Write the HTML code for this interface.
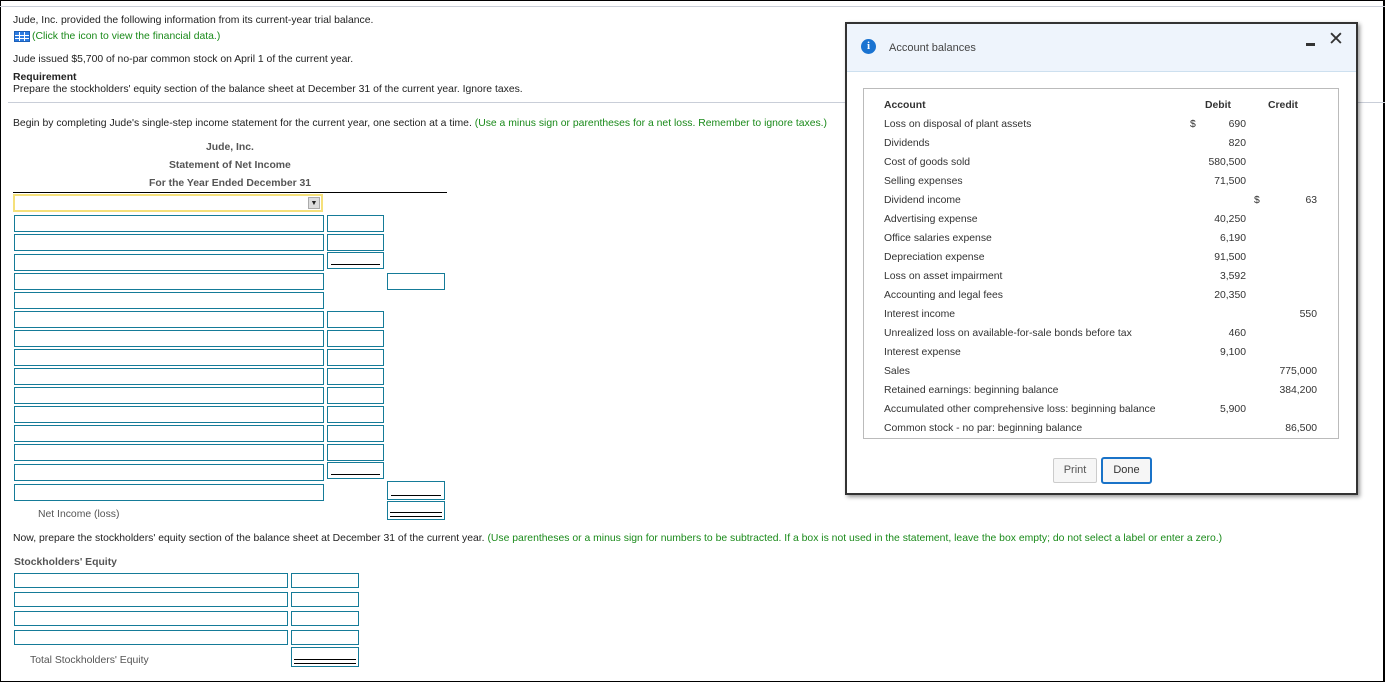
<!DOCTYPE html>
<html><head><meta charset="utf-8"><style>
*{margin:0;padding:0;box-sizing:border-box}
body{width:1385px;height:682px;position:relative;overflow:hidden;background:#fff;font-family:"Liberation Sans",Arial,sans-serif;font-size:10.4px;color:#222}
.frame{position:absolute;left:0;top:0;width:1385px;height:682px;border:1px solid #000;border-right-width:2px}
.t{position:absolute;white-space:nowrap}
.g{color:#1a8a1a}
.b{position:absolute;border:1px solid #157b98;background:#fff;height:17px}
.u::after{content:"";position:absolute;left:3px;right:3px;bottom:3px;border-bottom:1px solid #000}
.dd::after{content:"";position:absolute;left:2px;right:2px;bottom:2px;border-bottom:1px solid #000;height:3px;border-top:1px solid #000}
.hr{position:absolute;height:1px;background:#c9ced8}
.modal{position:absolute;left:845px;top:22px;width:513px;height:473px;border:2px solid #333;background:#fff;box-shadow:2px 2px 4px rgba(0,0,0,.4)}
.mh{position:absolute;left:0;top:0;right:0;height:48px;background:#eef4fc;border-bottom:1px solid #cde0ef}
.tbl{position:absolute;left:16px;top:64px;width:476px;height:351px;border:1px solid #bbb}
.r{position:absolute;left:20px;width:450px;height:19px;color:#333}
.r span{position:absolute;top:0}
</style></head><body>
<div class="frame"></div>
<div class="hr" style="left:0;top:6px;width:1385px"></div>
<div class="t" style="left:13px;top:15px">Jude, Inc. provided the following information from its current-year trial balance.</div>
<div class="t" style="left:14px;top:31px;width:16px;height:11px;background:#2c7be0;border:1px solid #1b5fb8;background-image:linear-gradient(90deg,transparent 4px,#fff 4px,#fff 5px,transparent 5px,transparent 9px,#fff 9px,#fff 10px,transparent 10px),linear-gradient(transparent 3px,#fff 3px,#fff 4px,transparent 4px,transparent 6px,#fff 6px,#fff 7px,transparent 7px)"></div>
<div class="t g" style="left:32px;top:31px">(Click the icon to view the financial data.)</div>
<div class="t" style="left:13px;top:54px">Jude issued $5,700 of no-par common stock on April 1 of the current year.</div>
<div class="t" style="left:13px;top:72px;font-weight:bold">Requirement</div>
<div class="t" style="left:13px;top:84px">Prepare the stockholders' equity section of the balance sheet at December 31 of the current year. Ignore taxes.</div>
<div class="hr" style="left:8px;top:102px;width:1377px"></div>
<div class="t" style="left:13px;top:118px">Begin by completing Jude's single-step income statement for the current year, one section at a time. <span class="g">(Use a minus sign or parentheses for a net loss. Remember to ignore taxes.)</span></div>
<div class="t" style="left:206px;top:142px;font-weight:bold;color:#555">Jude, Inc.</div>
<div class="t" style="left:169px;top:160px;font-weight:bold;color:#555">Statement of Net Income</div>
<div class="t" style="left:149px;top:178px;font-weight:bold;color:#555">For the Year Ended December 31</div>
<div style="position:absolute;left:13px;top:192px;width:434px;height:1px;background:#000"></div>
<div style="position:absolute;left:13px;top:194px;width:310px;height:18px;border:2px solid #f5e07a;background:#fff"><div style="position:absolute;right:1px;top:1px;width:12px;height:12px;background:#ddd;border:1px solid #aaa;font-size:7px;text-align:center;line-height:11px">▼</div></div>
<div class="b" style="left:14px;top:215px;width:310px"></div><div class="b" style="left:327px;top:215px;width:57px"></div>
<div class="b" style="left:14px;top:234px;width:310px"></div><div class="b" style="left:327px;top:234px;width:57px"></div>
<div class="b" style="left:14px;top:254px;width:310px"></div><div class="b u" style="left:327px;top:252px;width:57px"></div>
<div class="b" style="left:14px;top:273px;width:310px"></div><div class="b" style="left:387px;top:273px;width:58px"></div>
<div class="b" style="left:14px;top:292px;width:310px"></div>
<div class="b" style="left:14px;top:311px;width:310px"></div><div class="b" style="left:327px;top:311px;width:57px"></div>
<div class="b" style="left:14px;top:330px;width:310px"></div><div class="b" style="left:327px;top:330px;width:57px"></div>
<div class="b" style="left:14px;top:349px;width:310px"></div><div class="b" style="left:327px;top:349px;width:57px"></div>
<div class="b" style="left:14px;top:368px;width:310px"></div><div class="b" style="left:327px;top:368px;width:57px"></div>
<div class="b" style="left:14px;top:387px;width:310px"></div><div class="b" style="left:327px;top:387px;width:57px"></div>
<div class="b" style="left:14px;top:406px;width:310px"></div><div class="b" style="left:327px;top:406px;width:57px"></div>
<div class="b" style="left:14px;top:425px;width:310px"></div><div class="b" style="left:327px;top:425px;width:57px"></div>
<div class="b" style="left:14px;top:444px;width:310px"></div><div class="b" style="left:327px;top:444px;width:57px"></div>
<div class="b" style="left:14px;top:464px;width:310px"></div><div class="b u" style="left:327px;top:462px;width:57px"></div>
<div class="b" style="left:14px;top:484px;width:310px"></div><div class="b u" style="left:387px;top:481px;width:58px;height:19px"></div>
<div class="b dd" style="left:387px;top:501px;width:58px;height:19px"></div>
<div class="t" style="left:38px;top:509px;color:#555">Net Income (loss)</div>
<div class="t" style="left:13px;top:533px">Now, prepare the stockholders' equity section of the balance sheet at December 31 of the current year. <span class="g">(Use parentheses or a minus sign for numbers to be subtracted. If a box is not used in the statement, leave the box empty; do not select a label or enter a zero.)</span></div>
<div class="t" style="left:14px;top:557px;font-weight:bold;color:#555">Stockholders' Equity</div>
<div class="b" style="left:14px;top:573px;width:274px;height:15px"></div><div class="b" style="left:291px;top:573px;width:68px;height:15px"></div>
<div class="b" style="left:14px;top:592px;width:274px;height:15px"></div><div class="b" style="left:291px;top:592px;width:68px;height:15px"></div>
<div class="b" style="left:14px;top:611px;width:274px;height:15px"></div><div class="b" style="left:291px;top:611px;width:68px;height:15px"></div>
<div class="b" style="left:14px;top:630px;width:274px;height:15px"></div><div class="b" style="left:291px;top:630px;width:68px;height:15px"></div>
<div class="b dd" style="left:291px;top:647px;width:68px;height:20px"></div>
<div class="t" style="left:30px;top:655px;color:#555">Total Stockholders' Equity</div>

<div class="modal">
 <div class="mh">
  <div style="position:absolute;left:14px;top:15px;width:15px;height:15px;border-radius:50%;background:#1a73d1;color:#fff;font-weight:bold;font-size:11px;text-align:center;line-height:15px;font-family:'Liberation Serif',serif">i</div>
  <div class="t" style="left:42px;top:18px;color:#444;font-size:11px">Account balances</div>
  <div style="position:absolute;left:459px;top:19px;width:9px;height:3px;background:#333"></div>
  <div class="t" style="left:481px;top:4px;font-size:19px;color:#333">✕</div>
 </div>
 <div class="tbl">
  <div class="r" style="top:11px;font-weight:bold"><span style="left:321px">Debit</span><span style="left:384px">Credit</span><span style="left:0">Account</span></div>
  <div class="r" style="top:30px"><span style="left:0">Loss on disposal of plant assets</span><span style="left:306px">$</span><span style="right:88px">690</span></div>
  <div class="r" style="top:49px"><span style="left:0">Dividends</span><span style="right:88px">820</span></div>
  <div class="r" style="top:68px"><span style="left:0">Cost of goods sold</span><span style="right:88px">580,500</span></div>
  <div class="r" style="top:87px"><span style="left:0">Selling expenses</span><span style="right:88px">71,500</span></div>
  <div class="r" style="top:106px"><span style="left:0">Dividend income</span><span style="left:370px">$</span><span style="right:17px">63</span></div>
  <div class="r" style="top:125px"><span style="left:0">Advertising expense</span><span style="right:88px">40,250</span></div>
  <div class="r" style="top:144px"><span style="left:0">Office salaries expense</span><span style="right:88px">6,190</span></div>
  <div class="r" style="top:163px"><span style="left:0">Depreciation expense</span><span style="right:88px">91,500</span></div>
  <div class="r" style="top:182px"><span style="left:0">Loss on asset impairment</span><span style="right:88px">3,592</span></div>
  <div class="r" style="top:201px"><span style="left:0">Accounting and legal fees</span><span style="right:88px">20,350</span></div>
  <div class="r" style="top:220px"><span style="left:0">Interest income</span><span style="right:17px">550</span></div>
  <div class="r" style="top:239px"><span style="left:0">Unrealized loss on available-for-sale bonds before tax</span><span style="right:88px">460</span></div>
  <div class="r" style="top:258px"><span style="left:0">Interest expense</span><span style="right:88px">9,100</span></div>
  <div class="r" style="top:277px"><span style="left:0">Sales</span><span style="right:17px">775,000</span></div>
  <div class="r" style="top:296px"><span style="left:0">Retained earnings: beginning balance</span><span style="right:17px">384,200</span></div>
  <div class="r" style="top:315px"><span style="left:0">Accumulated other comprehensive loss: beginning balance</span><span style="right:88px">5,900</span></div>
  <div class="r" style="top:334px"><span style="left:0">Common stock - no par: beginning balance</span><span style="right:17px">86,500</span></div>
 </div>
 <div style="position:absolute;left:206px;top:434px;width:44px;height:25px;border:1px solid #ccc;border-radius:2px;background:#f6f6f6;color:#555;text-align:center;line-height:23px;font-size:11px">Print</div>
 <div style="position:absolute;left:254px;top:433px;width:51px;height:27px;border:2px solid #1a73c8;border-radius:3px;background:#f6f6f6;color:#333;text-align:center;line-height:23px;font-size:11px">Done</div>
</div>
</body></html>
